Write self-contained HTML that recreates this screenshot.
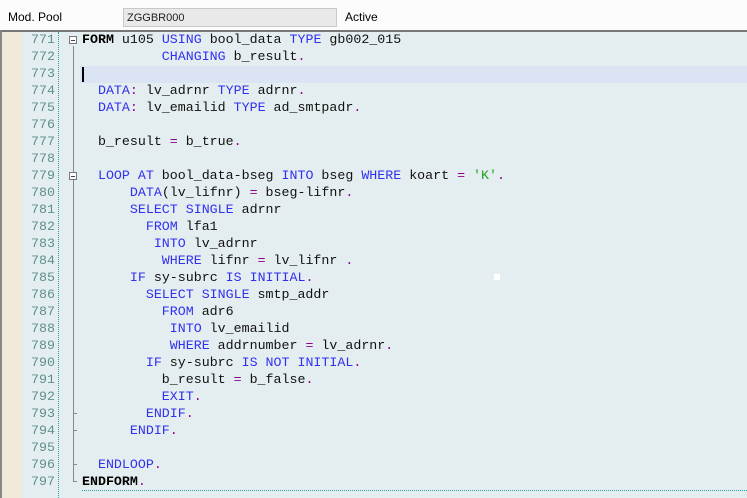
<!DOCTYPE html>
<html><head><meta charset="utf-8"><style>
body{margin:0;width:747px;height:498px;overflow:hidden;background:#fdfdfd;font-family:"Liberation Sans",sans-serif}
.hdr{position:absolute;left:0;top:0;width:747px;height:30px;background:#fcfcfc}
.l1{position:absolute;left:8px;top:10px;font-size:12px;color:#000}
.fld{position:absolute;left:123px;top:8px;width:214px;height:19px;background:#e9e9e9;border:1px solid #c8c8c8;box-sizing:border-box;font-size:11px;padding:3px 0 0 3px;color:#222}
.l2{position:absolute;left:345px;top:10px;font-size:12px}
.ed{position:absolute;left:0;top:30px;width:747px;height:468px;background:#e4eef0;border-top:2px solid #777;border-left:2px solid #888;box-sizing:border-box}
.beige{position:absolute;left:2px;top:32px;width:20px;height:466px;background:#f2ead8}
.gut{position:absolute;left:22px;top:32px;width:36px;height:466px;background:#e4eef0;border-right:1px dotted #2a9a9a}
.row{position:absolute;left:0;height:17px;width:747px;font-size:13.3px;line-height:17px;white-space:pre}
.row span{font-family:"Liberation Mono","DejaVu Sans Mono",monospace}
.n{position:absolute;left:22px;width:33px;text-align:right;color:#5f8f8f}
.c{position:absolute;left:82px;color:#111}
.k{color:#3030f0}.b{font-weight:bold;color:#000}.p{color:#900090}.s{color:#20a020}
.hl{position:absolute;left:80px;top:66px;width:667px;height:17px;background:#dae4f2}
.vl{position:absolute;left:73px;width:1px;background:#888}
.box{position:absolute;left:69px;width:8px;height:8px;border:1px solid #777;box-sizing:border-box;background:#fff}
.box:after{content:"";position:absolute;left:1px;top:3px;width:4px;height:1px;background:#444}
.t{position:absolute;left:73px;width:4px;height:1px;background:#888}
</style></head><body>
<div class="hdr"></div>
<div class="l1">Mod. Pool</div>
<div class="fld">ZGGBR000</div>
<div class="l2">Active</div>
<div class="ed"></div>
<div class="beige"></div>
<div class="gut"></div>
<div class="hl"></div>
<div style="position:absolute;left:82px;top:67px;width:2px;height:15px;background:#000"></div>
<div class="vl" style="top:46px;height:436px"></div>
<div class="box" style="top:36px"></div>
<div class="box" style="top:172px"></div>
<div class="t" style="top:413px"></div>
<div class="t" style="top:430px"></div>
<div class="t" style="top:464px"></div>
<div class="t" style="top:481px"></div>
<div style="position:absolute;left:82px;top:490px;width:665px;border-top:1px dotted #2a9a9a"></div>
<div style="position:absolute;left:494px;top:274px;width:6px;height:6px;background:#fff"></div>

<div class="row" style="top:31px"><span class="n">771</span><span class="c"><span class="b">FORM</span> u105 <span class="k">USING</span> bool_data <span class="k">TYPE</span> gb002_015</span></div>
<div class="row" style="top:48px"><span class="n">772</span><span class="c">          <span class="k">CHANGING</span> b_result<span class="p">.</span></span></div>
<div class="row" style="top:65px"><span class="n">773</span></div>
<div class="row" style="top:82px"><span class="n">774</span><span class="c">  <span class="k">DATA</span><span class="p">:</span> lv_adrnr <span class="k">TYPE</span> adrnr<span class="p">.</span></span></div>
<div class="row" style="top:99px"><span class="n">775</span><span class="c">  <span class="k">DATA</span><span class="p">:</span> lv_emailid <span class="k">TYPE</span> ad_smtpadr<span class="p">.</span></span></div>
<div class="row" style="top:116px"><span class="n">776</span></div>
<div class="row" style="top:133px"><span class="n">777</span><span class="c">  b_result <span class="p">=</span> b_true<span class="p">.</span></span></div>
<div class="row" style="top:150px"><span class="n">778</span></div>
<div class="row" style="top:167px"><span class="n">779</span><span class="c">  <span class="k">LOOP AT</span> bool_data-bseg <span class="k">INTO</span> bseg <span class="k">WHERE</span> koart <span class="p">=</span> <span class="s">'K'</span><span class="p">.</span></span></div>
<div class="row" style="top:184px"><span class="n">780</span><span class="c">      <span class="k">DATA</span>(lv_lifnr) <span class="p">=</span> bseg-lifnr<span class="p">.</span></span></div>
<div class="row" style="top:201px"><span class="n">781</span><span class="c">      <span class="k">SELECT SINGLE</span> adrnr</span></div>
<div class="row" style="top:218px"><span class="n">782</span><span class="c">        <span class="k">FROM</span> lfa1</span></div>
<div class="row" style="top:235px"><span class="n">783</span><span class="c">         <span class="k">INTO</span> lv_adrnr</span></div>
<div class="row" style="top:252px"><span class="n">784</span><span class="c">          <span class="k">WHERE</span> lifnr <span class="p">=</span> lv_lifnr <span class="p">.</span></span></div>
<div class="row" style="top:269px"><span class="n">785</span><span class="c">      <span class="k">IF</span> sy-subrc <span class="k">IS INITIAL</span><span class="p">.</span></span></div>
<div class="row" style="top:286px"><span class="n">786</span><span class="c">        <span class="k">SELECT SINGLE</span> smtp_addr</span></div>
<div class="row" style="top:303px"><span class="n">787</span><span class="c">          <span class="k">FROM</span> adr6</span></div>
<div class="row" style="top:320px"><span class="n">788</span><span class="c">           <span class="k">INTO</span> lv_emailid</span></div>
<div class="row" style="top:337px"><span class="n">789</span><span class="c">           <span class="k">WHERE</span> addrnumber <span class="p">=</span> lv_adrnr<span class="p">.</span></span></div>
<div class="row" style="top:354px"><span class="n">790</span><span class="c">        <span class="k">IF</span> sy-subrc <span class="k">IS NOT INITIAL</span><span class="p">.</span></span></div>
<div class="row" style="top:371px"><span class="n">791</span><span class="c">          b_result <span class="p">=</span> b_false<span class="p">.</span></span></div>
<div class="row" style="top:388px"><span class="n">792</span><span class="c">          <span class="k">EXIT</span><span class="p">.</span></span></div>
<div class="row" style="top:405px"><span class="n">793</span><span class="c">        <span class="k">ENDIF</span><span class="p">.</span></span></div>
<div class="row" style="top:422px"><span class="n">794</span><span class="c">      <span class="k">ENDIF</span><span class="p">.</span></span></div>
<div class="row" style="top:439px"><span class="n">795</span></div>
<div class="row" style="top:456px"><span class="n">796</span><span class="c">  <span class="k">ENDLOOP</span><span class="p">.</span></span></div>
<div class="row" style="top:473px"><span class="n">797</span><span class="c"><span class="b">ENDFORM</span><span class="p">.</span></span></div>
</body></html>
